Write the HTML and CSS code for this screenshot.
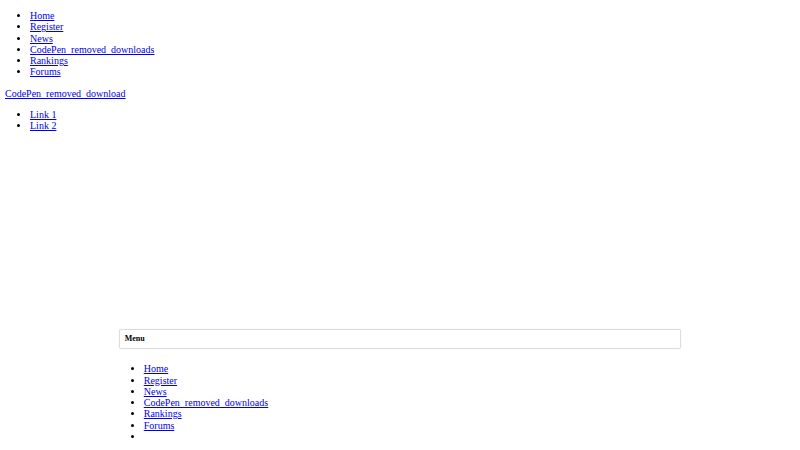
FILE: index.html
```html
<!DOCTYPE html>
<html>
<head>
<meta charset="utf-8">
<link rel="stylesheet" href="styles.css">
</head>
<body>
<ul class="list">
  <li><a href="#">Home</a></li>
  <li><a href="#">Register</a></li>
  <li><a href="#">News</a></li>
  <li><a href="#">CodePen_removed_downloads</a></li>
  <li><a href="#">Rankings</a></li>
  <li><a href="#">Forums</a></li>
</ul>
<p class="brand"><a href="#">CodePen_removed_download</a></p>
<ul class="list">
  <li><a href="#">Link 1</a></li>
  <li><a href="#">Link 2</a></li>
</ul>
<div class="spacer"></div>
<nav class="nav">
  <div class="menu-bar"><span class="menu-title">Menu</span></div>
  <ul class="list nav-list">
    <li><a href="#">Home</a></li>
    <li><a href="#">Register</a></li>
    <li><a href="#">News</a></li>
    <li><a href="#">CodePen_removed_downloads</a></li>
    <li><a href="#">Rankings</a></li>
    <li><a href="#">Forums</a></li>
    <li>&nbsp;</li>
  </ul>
</nav>
</body>
</html>
```
FILE: styles.css
```css
html, body {
  background: #ffffff;
}
body {
  margin: 0 5px;
  font-family: "Liberation Serif", "Times New Roman", serif;
  font-size: 10px;
  line-height: 11.25px;
  color: #000000;
}
a {
  color: #0000ee;
}
.list {
  margin: 10px 0;
  padding-left: 25px;
  list-style: disc;
}
.brand {
  margin: 10px 0;
}
.spacer {
  height: 187.5px;
}
.nav {
  width: 562.5px;
  margin: 0 auto;
}
.menu-bar {
  height: 20.5px;
  box-sizing: border-box;
  border: 1px solid #dcdcdc;
  border-radius: 2px;
  box-shadow: 0 0 1px rgba(0, 0, 0, 0.12);
  display: flex;
  align-items: center;
  padding-left: 5px;
}
.menu-title {
  font-weight: bold;
  font-size: 8px;
  line-height: 10px;
}
.nav-list {
  margin-top: 14px;
}
```
